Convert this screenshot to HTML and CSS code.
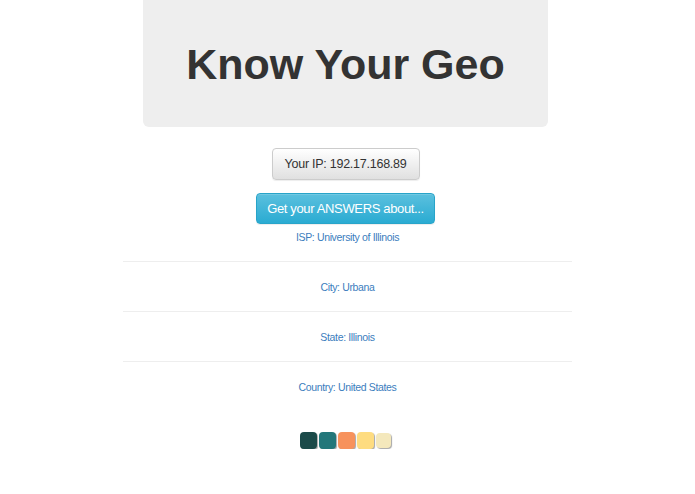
FILE: index.html
```html
<!DOCTYPE html>
<html>
<head>
<meta charset="utf-8">
<link rel="stylesheet" href="styles.css">
</head>
<body>
<div class="top">
  <div class="jumbotron"><h1 class="title">Know Your Geo</h1></div>
  <button class="btn btn-default">Your IP: 192.17.168.89</button>
  <button class="btn btn-info">Get your ANSWERS about...</button>
</div>
<ul class="answers">
  <li class="row first">ISP: University of Illinois</li>
  <li class="row">City: Urbana</li>
  <li class="row">State: Illinois</li>
  <li class="row">Country: United States</li>
</ul>
<div class="palette">
  <span class="swatch s1"></span>
  <span class="swatch s2"></span>
  <span class="swatch s3"></span>
  <span class="swatch s4"></span>
  <span class="swatch s5"></span>
</div>
</body>
</html>
```
FILE: styles.css
```css
html, body {
  margin: 0;
  padding: 0;
  background: #fff;
  font-family: "Liberation Sans", Arial, Helvetica, sans-serif;
}
.top {
  display: flex;
  flex-direction: column;
  align-items: center;
  padding-right: 4px;
}
.jumbotron {
  width: 405px;
  height: 127px;
  box-sizing: border-box;
  background: #eeeeee;
  border-radius: 0 0 6px 6px;
  padding-top: 43px;
  text-align: center;
}
.title {
  margin: 0;
  font-size: 43px;
  line-height: 43px;
  font-weight: bold;
  color: #333;
}
.btn {
  font-family: "Liberation Sans", Arial, Helvetica, sans-serif;
  box-sizing: border-box;
  border-radius: 4px;
  padding: 0;
  cursor: pointer;
}
.btn-default {
  margin-top: 21px;
  height: 32px;
  width: 148px;
  font-size: 12.5px;
  letter-spacing: -0.25px;
  color: #333;
  background: linear-gradient(to bottom, #ffffff 0%, #e0e0e0 100%);
  border: 1px solid #cccccc;
  box-shadow: inset 0 1px 0 rgba(255,255,255,.15), 0 1px 1px rgba(0,0,0,.075);
}
.btn-info {
  margin-top: 13px;
  height: 31px;
  width: 179px;
  font-size: 13px;
  letter-spacing: -0.35px;
  color: #fff;
  background: linear-gradient(to bottom, #5bc0de 0%, #2aabd2 100%);
  border: 1px solid #28a4c9;
  box-shadow: inset 0 1px 0 rgba(255,255,255,.15), 0 1px 1px rgba(0,0,0,.075);
}
.answers {
  list-style: none;
  margin: 0 auto;
  padding: 0;
  width: 449px;
}
.row {
  padding: 18px 0 17px;
  line-height: 14px;
  font-size: 10.5px;
  letter-spacing: -0.35px;
  color: #3b7dbd;
  text-align: center;
  border-top: 1px solid #eeeeee;
}
.row.first {
  padding-top: 6px;
  border-top: 0;
}
.palette {
  display: flex;
  justify-content: center;
  align-items: center;
  gap: 2px;
  margin-top: 21px;
  padding-right: 5px;
}
.swatch {
  width: 17px;
  height: 17px;
  border-radius: 4px;
  box-shadow: 1px 1px 1px rgba(0,0,0,.35);
}
.s1 { background: #1b4a49; }
.s2 { background: #23777a; }
.s3 { background: #f7925c; }
.s4 { background: #fedc80; }
.s5 { background: #f4e8bc; width: 15px; height: 15px; }
```
